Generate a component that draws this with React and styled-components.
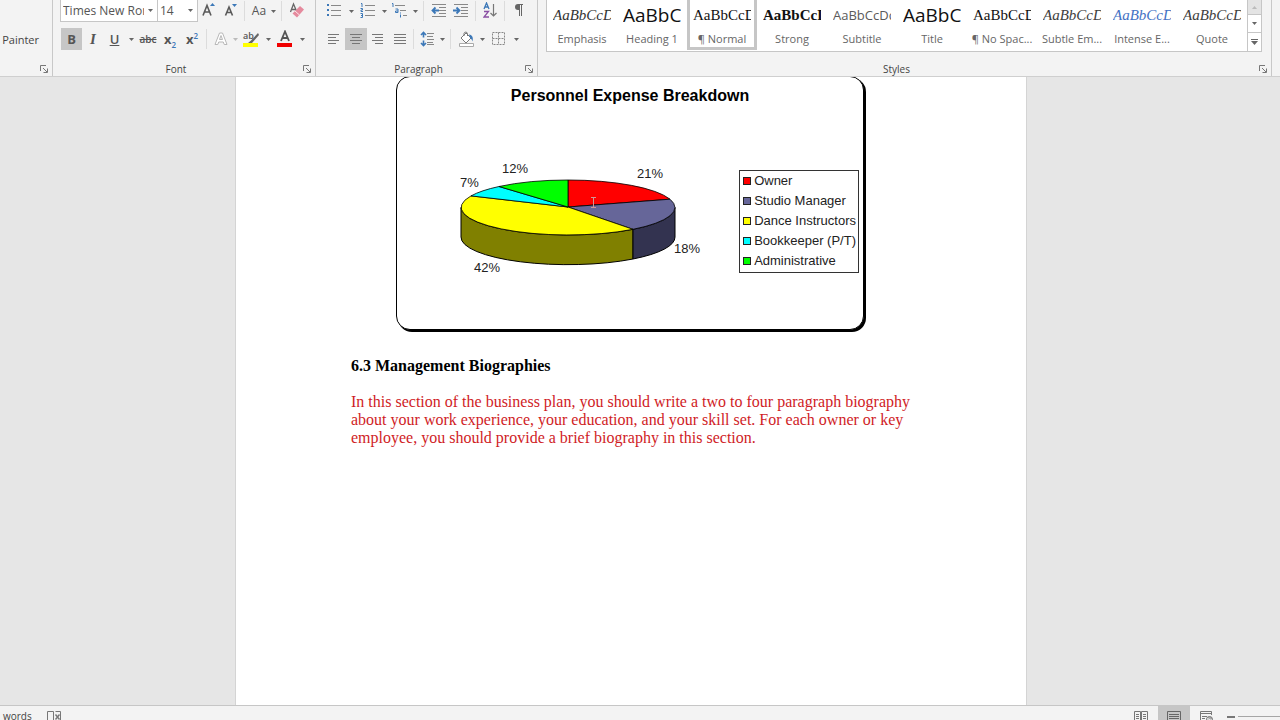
import React from "react";
import styled, { createGlobalStyle } from "styled-components";

const GlobalStyle = createGlobalStyle`
  *,
  *::before {
    box-sizing: border-box;
  }

  body {
    margin: 0;
    font-family: "Open Sans", "Noto Sans", sans-serif;
    color: #444;
  }
`;

const Shell = styled.div`
  display: flex;
  flex-direction: column;
  height: 100vh;
  overflow: hidden;
  background: #e6e6e6;
`;

/* ---------- ribbon ---------- */

const Ribbon = styled.header`
  display: flex;
  flex: none;
  background: #f3f3f3;
  border-bottom: 1px solid #cfcfcf;
`;

const Group = styled.section`
  display: flex;
  flex-direction: column;
  flex: ${({ $grow }) => ($grow ? "1" : "none")};
  min-width: 0;
  width: ${({ $width }) => ($width ? `${$width}px` : "auto")};
  border-right: 1px solid #c8c8c8;
  overflow: hidden;
`;

const Row = styled.div`
  display: flex;
  align-items: center;
  height: 22px;
  margin-bottom: ${({ $last }) => ($last ? "12px" : "6px")};
  padding-left: ${({ $indent }) => $indent || 8}px;
`;

const GroupFooter = styled.div`
  display: flex;
  align-items: center;
  height: 14px;
`;

const GroupLabel = styled.span`
  flex: 1;
  text-align: center;
  font-size: 10px;
  line-height: 14px;
`;

const Launcher = styled.button`
  display: flex;
  width: 16px;
  padding: 0 0 0 4px;
  border: none;
  background: none;
`;

const PainterButton = styled.button`
  display: flex;
  justify-content: flex-end;
  width: 100%;
  padding: 0 13px 0 0;
  border: none;
  background: none;
  font: 11px "Open Sans", sans-serif;
  color: #444;
  white-space: nowrap;
`;

const Combo = styled.label`
  display: flex;
  align-items: center;
  width: ${({ $width }) => $width}px;
  height: 22px;
  margin-right: -1px;
  padding-right: 4px;
  border: 1px solid #c6c6c6;
  border-top: none;
  background: #fff;
`;

const ComboSelect = styled.select`
  flex: 1;
  min-width: 0;
  height: 20px;
  margin-right: 4px;
  padding: 0 0 0 2px;
  border: none;
  outline: none;
  appearance: none;
  background: transparent;
  font: 12px "Open Sans", sans-serif;
  color: #555;
  text-overflow: clip;
`;

const Tool = styled.button`
  display: flex;
  flex: none;
  align-items: center;
  justify-content: center;
  width: ${({ $width }) => $width || 22}px;
  height: 22px;
  padding: 0;
  border: none;
  background: ${({ $active }) => ($active ? "#c6c6c6" : "transparent")};
  font-family: "Open Sans", sans-serif;
  font-size: 12px;
  line-height: 20px;
  color: #555;
`;

const Divider = styled.span`
  flex: none;
  width: 1px;
  height: 20px;
  margin: 0 ${({ $gap }) => $gap || 3}px;
  background: #dcdcdc;
`;

const Bold = styled.b`
  font-size: 13px;
`;

const Italic = styled.i`
  font-family: "Liberation Serif", serif;
  font-size: 15px;
  font-weight: bold;
`;

const Underline = styled.u`
  font-size: 13px;
  font-weight: 600;
`;

const Strike = styled.s`
  font-size: 10px;
  font-weight: 600;
`;

const Script = styled.span`
  font-size: 13px;
  font-weight: bold;

  sub,
  sup {
    font-size: 8px;
    font-weight: 600;
    line-height: 0;
    color: #3c78b8;
  }
`;

/* ---------- styles gallery ---------- */

const Gallery = styled.div`
  display: flex;
  height: 52px;
  margin: 0 9px 10px 8px;
  border: 1px solid #c6c6c6;
  border-top: none;
  background: #fff;
`;

const StyleCard = styled.button`
  display: flex;
  flex: 1;
  flex-direction: column;
  align-items: center;
  min-width: 0;
  height: 50px;
  padding: 0 2px;
  border: 3px solid ${({ $active }) => ($active ? "#c6c6c6" : "transparent")};
  border-top: none;
  background: none;
`;

const Preview = styled.span`
  flex: none;
  width: 58px;
  height: 29px;
  overflow: hidden;
  white-space: nowrap;
  text-align: left;
  line-height: 30px;
  font-family: ${({ $sans }) =>
    $sans ? '"Open Sans", sans-serif' : '"Liberation Serif", serif'};
  font-size: ${({ $size }) => $size || 15}px;
  font-style: ${({ $italic }) => ($italic ? "italic" : "normal")};
  font-weight: ${({ $bold }) => ($bold ? "bold" : "normal")};
  color: ${({ $color }) => $color || "#111"};
`;

const StyleName = styled.span`
  font: 11px/20px "Open Sans", sans-serif;
  color: #666;
  white-space: nowrap;
`;

const GalleryNav = styled.div`
  display: flex;
  flex-direction: column;
  width: 14px;
  border-left: 1px solid #c6c6c6;
`;

const NavButton = styled.button`
  display: flex;
  align-items: center;
  justify-content: center;
  height: ${({ $height }) => $height}px;
  padding: 0;
  border: none;
  border-bottom: ${({ $last }) => ($last ? "none" : "1px solid #c6c6c6")};
  background: ${({ $disabled }) => ($disabled ? "#e4e4e4" : "#fff")};
`;

const RibbonEdge = styled.div`
  width: 8px;
`;

/* ---------- document ---------- */

const Workspace = styled.main`
  flex: 1;
  min-height: 0;
  padding-right: 18px;
  overflow: hidden;
`;

const Paper = styled.article`
  display: flow-root;
  max-width: 792px;
  min-height: 100%;
  margin: 0 auto;
  padding: 0 115px;
  border: solid #d4d4d4;
  border-width: 0 1px;
  background: #fff;
  font-family: "Liberation Serif", serif;
`;

const ChartFrame = styled.figure`
  max-width: 468px;
  margin: -1px 0 27px 45px;
  padding: 10px 4px 54px 53px;
  border: 1px solid #000;
  border-radius: 14px;
  box-shadow: 2px 2px 0 #000;
  background: #fff;
  font-family: "Liberation Sans", sans-serif;
  color: #000;
`;

const ChartTitle = styled.figcaption`
  margin: 0 0 50px -49px;
  text-align: center;
  font-size: 16px;
  font-weight: bold;
  line-height: 18px;
`;

const ChartBody = styled.div`
  display: flex;
  align-items: flex-start;
  justify-content: space-between;
`;

const Legend = styled.ul`
  margin: 15px 0 0;
  padding: 0 2px 1px 3px;
  border: 1px solid #333;
  list-style: none;
  font-size: 13px;
  line-height: 20px;
  color: #222;
`;

const LegendItem = styled.li`
  display: flex;
  align-items: center;
  gap: 3px;
  white-space: nowrap;

  &::before {
    content: "";
    width: 8px;
    height: 8px;
    border: 1px solid #222;
    background: ${({ $color }) => $color};
  }
`;

const Heading = styled.h2`
  margin: 0 0 18px;
  font-size: 16px;
  line-height: 18px;
  color: #000;
`;

const Paragraph = styled.p`
  margin: 0;
  font-size: 16px;
  line-height: 18px;
  color: #d01c1f;
`;

/* ---------- status bar ---------- */

const StatusBar = styled.footer`
  display: flex;
  flex: none;
  align-items: flex-start;
  height: 15px;
  padding-left: 3px;
  border-top: 1px solid #c6c6c6;
  background: #f3f3f3;
  font-size: 10px;
  line-height: 20px;
  overflow: hidden;
`;

const ProofButton = styled(Tool)`
  margin-left: 11px;
`;

const ViewTools = styled.div`
  display: flex;
  margin-left: auto;
`;

const ZoomTrack = styled.label`
  display: flex;
  width: 42px;
  height: 20px;
  overflow: hidden;
`;

const ZoomRange = styled.input`
  flex: none;
  width: 110px;
  height: 20px;
  margin: 0;
  appearance: none;
  background: transparent;

  &::-webkit-slider-runnable-track {
    height: 1px;
    background: #a6a6a6;
  }

  &::-webkit-slider-thumb {
    appearance: none;
    width: 5px;
    height: 11px;
    margin-top: -5px;
    background: #666;
  }
`;

/* ---------- icons ---------- */

const GREY = "#777";
const BLUE = "#3c78b8";

const Caret = ({ color = "#666" }) => (
  <svg width="5" height="3" viewBox="0 0 5 3" aria-hidden="true">
    <path d="M0 0h5L2.5 3z" fill={color} />
  </svg>
);

const LauncherIcon = () => (
  <svg width="8" height="8" viewBox="0 0 8 8" fill="none" stroke={GREY}>
    <path d="M.5 6V.5H6M3 3l4 4M7.5 3.5v4h-4" />
  </svg>
);

const GrowFontIcon = ({ shrink }) => (
  <svg width="16" height="18" viewBox="0 0 16 18" fill="none">
    <path
      d={shrink ? "M2.5 13.5 6 5l3.5 8.5M4 10.5h4" : "M2 13.5 6 3.500l4 10M3.500 10h5"}
      stroke="#5a5a5a"
      strokeWidth="1.6"
    />
    <path d={shrink ? "M9 2h5l-2.5 3z" : "M9 4h5l-2.5-3z"} fill={BLUE} />
  </svg>
);

const EraserIcon = () => (
  <svg width="16" height="18" viewBox="0 0 16 18" fill="none">
    <path d="M1.5 10 4.500 2 7.500 9M3 7.500h3.500" stroke="#666" strokeWidth="1.3" />
    <path d="m3.500 11.500 7.500-7.500 4 3.500-7 8z" fill="#e58a9d" />
    <path d="m6 9 4.500 4" stroke="#fbe4e8" />
  </svg>
);

const OutlineAIcon = () => (
  <svg width="14" height="16" viewBox="0 0 14 16" fill="#fff" stroke="#b8b8b8">
    <path d="M1 13.5 5.5 2h3L13 13.5h-2.800l-.9-2.500H4.700l-.9 2.500zM5.500 8.500h3L7 4.500z" />
  </svg>
);

const HighlightIcon = () => (
  <svg width="18" height="18" viewBox="0 0 18 18">
    <text x="1" y="9" fontSize="9" fontWeight="600" fill="#555" fontFamily="Open Sans, sans-serif">
      ab
    </text>
    <path d="M16 3 9 10.500l-3 2.500h4l7-8z" fill="#666" />
    <path d="M1 13h15v4H1z" fill="#ffff00" />
  </svg>
);

const FontColorIcon = () => (
  <svg width="18" height="18" viewBox="0 0 18 18">
    <path d="M5 11 9 1.500l4 9.500M6.500 8h5" fill="none" stroke="#555" strokeWidth="1.8" />
    <path d="M1 13h15v4H1z" fill="#f00000" />
  </svg>
);

const LinesIcon = ({ lines }) => (
  <svg width="14" height="14" viewBox="0 0 14 14" stroke={GREY}>
    {lines.map(([x1, x2], i) => (
      <path key={i} d={`M${x1} ${2.5 + i * 3}H${x2}`} />
    ))}
  </svg>
);

const BulletsIcon = () => (
  <svg width="16" height="16" viewBox="0 0 16 16">
    <path d="M1 1h2v2H1zM1 6h2v2H1zM1 11h2v2H1z" fill={BLUE} />
    <path d="M5 2.500h10M5 7.500h10M5 12.500h10" stroke="#888" />
  </svg>
);

const NumberingIcon = () => (
  <svg width="16" height="16" viewBox="0 0 16 16" fill="none">
    <path d="M1 .500h1V4M.5 5.500h2v1.500h-1.500v1.500h2M.5 10.500h2v4h-2M1 12.500h1.500" stroke={BLUE} />
    <path d="M5 2.500h10M5 7.500h10M5 12.500h10" stroke="#888" />
  </svg>
);

const MultilevelIcon = () => (
  <svg width="18" height="16" viewBox="0 0 18 16" fill="none">
    <path d="M1 .500h1V4" stroke={BLUE} />
    <path d="M4.500 6h2.500v3.500H4.500V8H7M9.500 11.500v3M9.500 9.500v1" stroke={BLUE} />
    <path d="M4 2.500h10M9 7.500h6M12 12.500h4" stroke="#888" />
  </svg>
);

const IndentIcon = ({ outward }) => (
  <svg width="16" height="14" viewBox="0 0 16 14" fill="none">
    <path d="M1 .500h14M8 3.500h7M8 6.500h7M8 9.500h7M1 12.500h14" stroke="#888" />
    <path
      d={outward ? "M8 6.500H2M4.500 3.500l-3 3 3 3" : "M0 6.500h6M3.500 3.500l3 3-3 3"}
      stroke={BLUE}
      strokeWidth="1.8"
    />
  </svg>
);

const SortIcon = () => (
  <svg width="14" height="18" viewBox="0 0 14 18" fill="none">
    <path d="M1 7 3.500 1 6 7M2 5h3" stroke={BLUE} strokeWidth="1.3" />
    <path d="M1 9.500h4.500L1 15h5" stroke="#8a4fa3" strokeWidth="1.3" />
    <path d="M10.500 2v12M7.500 11l3 3 3-3" stroke={GREY} strokeWidth="1.2" />
  </svg>
);

const PilcrowIcon = () => (
  <svg width="10" height="16" viewBox="0 0 10 16">
    <path d="M5 1H4a3 3 0 0 0 0 6h1z" fill="#666" />
    <path d="M4 1.500h5M5.500 1v12M7.500 1v12" stroke="#666" />
  </svg>
);

const SpacingIcon = () => (
  <svg width="15" height="16" viewBox="0 0 15 16" fill="none">
    <path
      d="M3.500 2v4.500M3.500 9.500V14M1 4l2.500-2.500L6 4M1 12l2.500 2.500L6 12"
      stroke={BLUE}
      strokeWidth="1.6"
    />
    <path d="M7 2.500h7M7 5.500h6M7 8.500h7M7 11.500h6M7 13.500h7" stroke="#888" />
  </svg>
);

const BucketIcon = () => (
  <svg width="17" height="18" viewBox="0 0 17 18" fill="none">
    <path d="m3 8 5-5 5 5-5 5z" fill="#fff" stroke={GREY} />
    <path d="M6 6V3.500a1.800 1.800 0 0 1 3.500 0V6" stroke={GREY} />
    <path d="M11 4.500c3.500.5 4.500 3 3.500 7-.5-2-1.500-3-2.500-3.500z" fill={BLUE} />
    <path d="M1.500 13.500h14v3h-14z" fill="#fff" stroke="#aaa" />
  </svg>
);

const BordersIcon = () => (
  <svg width="14" height="14" viewBox="0 0 14 14" fill="none">
    <path d="M.5.5h12v12H.5zM6.500.5v12M.5 6.500h12" stroke="#888" strokeDasharray="2 1" />
  </svg>
);

const ProofIcon = () => (
  <svg width="14" height="12" viewBox="0 0 14 12" fill="none" stroke={GREY}>
    <path d="M6.500 11.500h-6V.5h6v11h7V.5h-5" />
    <path d="m8.500 3.500 4 5M12.500 3.500l-4 5" strokeWidth="1.4" />
  </svg>
);

const ReadModeIcon = () => (
  <svg width="14" height="12" viewBox="0 0 14 12" fill="none" stroke={GREY}>
    <path d="M.5.5h6v10h-6zM7.500.5h6v10h-6zM2 3.500h3M2 5.500h3M2 7.500h3M9 3.500h3M9 5.500h3M9 7.500h3" />
  </svg>
);

const PrintLayoutIcon = () => (
  <svg width="14" height="12" viewBox="0 0 14 12" fill="none" stroke="#666">
    <path d="M.5.5h13v11H.5zM2 3.500h10M2 5.500h10M2 7.500h10M2 9.500h10" />
  </svg>
);

const WebLayoutIcon = () => (
  <svg width="14" height="12" viewBox="0 0 14 12" fill="none" stroke={GREY}>
    <path d="M5 10.500H.5V.5h11V4M.5 2.500h11M2 5.500h5M2 7.500h3" />
    <circle cx="9.500" cy="8.500" r="3" fill="#aaa" />
    <path d="M7 8c2-1 2 2 5 1" stroke="#fff" />
  </svg>
);

/* ---------- data ---------- */

const previews = [
  { name: "Emphasis", italic: true, color: "#333" },
  { name: "Heading 1", sans: true, size: 19 },
  { name: "¶ Normal", active: true },
  { name: "Strong", bold: true },
  { name: "Subtitle", sans: true, size: 13, color: "#5a5a5a" },
  { name: "Title", sans: true, size: 19 },
  { name: "¶ No Spac..." },
  { name: "Subtle Em...", italic: true, color: "#404040" },
  { name: "Intense E...", italic: true, color: "#4472c4" },
  { name: "Quote", italic: true, color: "#404040" },
];

const slices = [
  { label: "Owner", color: "#ff0000", path: "M118 52V25A107 27.5 0 0 1 220 44.2Z" },
  { label: "Studio Manager", color: "#666699", path: "M118 52 220 44.2A107 27.5 0 0 1 183 74.3Z" },
  { label: "Dance Instructors", color: "#ffff00", path: "M118 52 183 74.3A107 27.5 0 0 1 21 40.9Z" },
  { label: "Bookkeeper (P/T)", color: "#00ffff", path: "M118 52 21 40.9A107 27.5 0 0 1 49 31.5Z" },
  { label: "Administrative", color: "#00ff00", path: "M118 52 49 31.5A107 27.5 0 0 1 118 25Z" },
];

const shares = [
  { text: "21%", x: 187, y: 23 },
  { text: "18%", x: 224, y: 98 },
  { text: "42%", x: 24, y: 117 },
  { text: "7%", x: 10, y: 32 },
  { text: "12%", x: 52, y: 18 },
];

const ArrowButton = ({ label, width = 12, color }) => (
  <Tool type="button" $width={width} aria-label={label}>
    <Caret color={color} />
  </Tool>
);

const Footer = ({ label }) => (
  <GroupFooter>
    <GroupLabel>{label}</GroupLabel>
    <Launcher type="button" aria-label={`${label} settings`}>
      <LauncherIcon />
    </Launcher>
  </GroupFooter>
);

const ClipboardGroup = () => (
  <Group $width={53}>
    <Row />
    <Row $last $indent={1}>
      <PainterButton type="button">Format Painter</PainterButton>
    </Row>
    <GroupFooter>
      <GroupLabel />
      <Launcher type="button" aria-label="Clipboard settings">
        <LauncherIcon />
      </Launcher>
    </GroupFooter>
  </Group>
);

const FontGroup = () => (
  <Group $width={263}>
    <Row $indent={7}>
      <Combo $width={98}>
        <ComboSelect aria-label="Font" defaultValue="Times New Roman">
          <option>Times New Roman</option>
          <option>Arial</option>
        </ComboSelect>
        <Caret />
      </Combo>
      <Combo $width={41}>
        <ComboSelect aria-label="Font size" defaultValue="14">
          <option>12</option>
          <option>14</option>
        </ComboSelect>
        <Caret />
      </Combo>
      <Tool type="button" $width={24} aria-label="Grow font"><GrowFontIcon /></Tool>
      <Tool type="button" $width={20} aria-label="Shrink font"><GrowFontIcon shrink /></Tool>
      <Divider />
      <Tool type="button" aria-label="Change case">Aa</Tool>
      <ArrowButton label="Case options" width={7} />
      <Divider $gap={4} />
      <Tool type="button" aria-label="Clear formatting"><EraserIcon /></Tool>
    </Row>
    <Row $last>
      <Tool type="button" $width={21} $active aria-label="Bold"><Bold>B</Bold></Tool>
      <Tool type="button" aria-label="Italic"><Italic>I</Italic></Tool>
      <Tool type="button" $width={21} aria-label="Underline"><Underline>U</Underline></Tool>
      <ArrowButton label="Underline options" />
      <Tool type="button" aria-label="Strikethrough"><Strike>abc</Strike></Tool>
      <Tool type="button" aria-label="Subscript"><Script>x<sub>2</sub></Script></Tool>
      <Tool type="button" aria-label="Superscript"><Script>x<sup>2</sup></Script></Tool>
      <Divider />
      <Tool type="button" aria-label="Text effects"><OutlineAIcon /></Tool>
      <ArrowButton label="Text effect options" width={7} color="#bbb" />
      <Tool type="button" $width={24} aria-label="Highlight"><HighlightIcon /></Tool>
      <ArrowButton label="Highlight options" width={10} />
      <Tool type="button" $width={24} aria-label="Font color"><FontColorIcon /></Tool>
      <ArrowButton label="Font color options" width={10} />
    </Row>
    <Footer label="Font" />
  </Group>
);

const ParagraphGroup = () => (
  <Group $width={222}>
    <Row $indent={7}>
      <Tool type="button" aria-label="Bullets"><BulletsIcon /></Tool>
      <ArrowButton label="Bullet options" />
      <Tool type="button" aria-label="Numbering"><NumberingIcon /></Tool>
      <ArrowButton label="Numbering options" width={10} />
      <Tool type="button" aria-label="Multilevel list"><MultilevelIcon /></Tool>
      <ArrowButton label="Multilevel options" width={8} />
      <Divider $gap={4} />
      <Tool type="button" aria-label="Decrease indent"><IndentIcon outward /></Tool>
      <Tool type="button" aria-label="Increase indent"><IndentIcon /></Tool>
      <Divider />
      <Tool type="button" aria-label="Sort"><SortIcon /></Tool>
      <Divider />
      <Tool type="button" aria-label="Show marks"><PilcrowIcon /></Tool>
    </Row>
    <Row $last $indent={7}>
      <Tool type="button" aria-label="Align left">
        <LinesIcon lines={[[1, 12], [1, 9], [1, 12], [1, 9]]} />
      </Tool>
      <Tool type="button" $active aria-label="Center">
        <LinesIcon lines={[[1, 13], [3, 11], [1, 13], [3, 11]]} />
      </Tool>
      <Tool type="button" aria-label="Align right">
        <LinesIcon lines={[[1, 12], [4, 12], [1, 12], [4, 12]]} />
      </Tool>
      <Tool type="button" aria-label="Justify">
        <LinesIcon lines={[[1, 13], [1, 13], [1, 13], [1, 13]]} />
      </Tool>
      <Divider $gap={2} />
      <Tool type="button" aria-label="Line spacing"><SpacingIcon /></Tool>
      <ArrowButton label="Spacing options" width={8} />
      <Divider $gap={4} />
      <Tool type="button" aria-label="Shading"><BucketIcon /></Tool>
      <ArrowButton label="Shading options" width={10} />
      <Tool type="button" $width={24} aria-label="Borders"><BordersIcon /></Tool>
      <ArrowButton label="Border options" width={10} />
    </Row>
    <Footer label="Paragraph" />
  </Group>
);

const StylesGroup = () => (
  <Group $grow>
    <Gallery>
      {previews.map((item) => (
        <StyleCard key={item.name} type="button" $active={item.active}>
          <Preview
            $sans={item.sans}
            $size={item.size}
            $italic={item.italic}
            $bold={item.bold}
            $color={item.color}
          >
            AaBbCcDd
          </Preview>
          <StyleName>{item.name}</StyleName>
        </StyleCard>
      ))}
      <GalleryNav>
        <NavButton type="button" $height={15} $disabled aria-label="Previous styles">
          <svg width="5" height="3" viewBox="0 0 5 3"><path d="M0 3h5L2.500 0z" fill="#bbb" /></svg>
        </NavButton>
        <NavButton type="button" $height={18} aria-label="Next styles"><Caret /></NavButton>
        <NavButton type="button" $height={18} $last aria-label="All styles">
          <svg width="7" height="6" viewBox="0 0 7 6"><path d="M0 0h7v1H0zM0 2h7L3.500 6z" fill="#666" /></svg>
        </NavButton>
      </GalleryNav>
    </Gallery>
    <Footer label="Styles" />
  </Group>
);

const ExpenseChart = () => (
  <ChartFrame>
    <ChartTitle>Personnel Expense Breakdown</ChartTitle>
    <ChartBody>
      <svg width="255" height="120" viewBox="0 0 255 120" role="img" aria-label="Personnel expense shares">
        <g stroke="#000">
          <path d="M11 52.5A107 27.5 0 0 0 183 74.3V104A107 27.5 0 0 1 11 82Z" fill="#808000" />
          <path d="M183 74.3A107 27.5 0 0 0 225 52.5V82A107 27.5 0 0 1 183 104Z" fill="#333350" />
          {slices.map((slice) => (
            <path key={slice.label} d={slice.path} fill={slice.color} strokeWidth="0.8" />
          ))}
        </g>
        {shares.map((share) => (
          <text key={share.text} x={share.x} y={share.y} fontSize="13" fill="#222">
            {share.text}
          </text>
        ))}
        <path d="M141 42.5h5M143.5 42.5v10M141 52.5h5" fill="none" stroke="#c99" />
      </svg>
      <Legend>
        {slices.map((slice) => (
          <LegendItem key={slice.label} $color={slice.color}>{slice.label}</LegendItem>
        ))}
      </Legend>
    </ChartBody>
  </ChartFrame>
);

const App = () => {
  return (
    <Shell>
      <GlobalStyle />
      <Ribbon>
        <ClipboardGroup />
        <FontGroup />
        <ParagraphGroup />
        <StylesGroup />
        <RibbonEdge />
      </Ribbon>
      <Workspace>
        <Paper>
          <ExpenseChart />
          <Heading>6.3 Management Biographies</Heading>
          <Paragraph>
            In this section of the business plan, you should write a two to four paragraph
            biography about your work experience, your education, and your skill set. For each
            owner or key employee, you should provide a brief biography in this section.
          </Paragraph>
        </Paper>
      </Workspace>
      <StatusBar>
        <span>words</span>
        <ProofButton type="button" aria-label="Proofing"><ProofIcon /></ProofButton>
        <ViewTools>
          <Tool type="button" $width={34} aria-label="Read mode"><ReadModeIcon /></Tool>
          <Tool type="button" $width={32} $active aria-label="Print layout"><PrintLayoutIcon /></Tool>
          <Tool type="button" $width={34} aria-label="Web layout"><WebLayoutIcon /></Tool>
          <Tool type="button" $width={14} aria-label="Zoom out">
            <svg width="8" height="2" viewBox="0 0 8 2"><path d="M0 0h8v2H0z" fill="#777" /></svg>
          </Tool>
          <ZoomTrack>
            <ZoomRange type="range" aria-label="Zoom" defaultValue="50" />
          </ZoomTrack>
        </ViewTools>
      </StatusBar>
    </Shell>
  );
};

export default App;
